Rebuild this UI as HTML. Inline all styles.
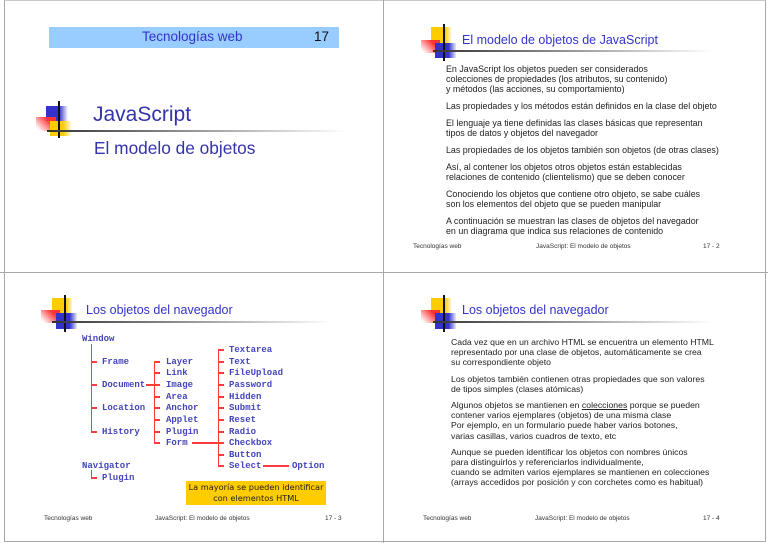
<!DOCTYPE html>
<html><head><meta charset="utf-8">
<style>
*{margin:0;padding:0;box-sizing:border-box}
body{width:768px;height:543px;background:#fff;position:relative;overflow:hidden;font-family:"Liberation Sans",sans-serif}
.a{position:absolute;white-space:nowrap}
.frame{position:absolute;left:4px;top:0;width:762px;height:542px;border:1px solid #a8a8a8;border-top:1px solid #c8c8c8}
.vl{position:absolute;left:383px;top:0;width:1px;height:543px;background:#a8a8a8}
.hl{position:absolute;left:0;top:272px;width:768px;height:1px;background:#a8a8a8}
.title{color:#3333cc;font-size:12.5px}
.body{color:#222;font-size:8.9px;line-height:10px}
.body p{margin-bottom:7px}
.foot{font-size:6.5px;color:#333}
.m{position:absolute;font-family:"Liberation Mono",monospace;font-weight:bold;font-size:9px;color:#4444bb;white-space:nowrap;line-height:10px}
.r{position:absolute;background:#ff3b3b}
</style></head><body>
<div class="frame"></div><div class="vl"></div><div class="hl"></div>

<!-- slide 1 -->
<div class="a" style="left:49px;top:27px;width:290px;height:21px;background:#99ccff"></div>
<div class="a title" style="left:142px;top:29px;font-size:13.5px">Tecnologías web</div>
<div class="a" style="left:314px;top:29px;font-size:13.5px;color:#111">17</div>
<div class="a" style="left:46px;top:106px;width:22px;height:15px;background:linear-gradient(90deg,#3333cc 60%,rgba(51,51,204,0))"></div>
<div class="a" style="left:36px;top:117px;width:20px;height:14px;background:linear-gradient(45deg,rgba(255,80,80,0) 10%,#ff3333 70%)"></div>
<div class="a" style="left:50px;top:121px;width:22px;height:15px;background:linear-gradient(90deg,#ffcc00 60%,rgba(255,204,0,0))"></div>
<div class="a" style="left:58px;top:101px;width:1.5px;height:37px;background:#111"></div>
<div class="a" style="left:47px;top:130px;width:300px;height:2px;background:linear-gradient(90deg,#333,#999 50%,rgba(255,255,255,0))"></div>
<div class="a" style="left:93px;top:103px;font-size:21px;color:#3333aa">JavaScript</div>
<div class="a" style="left:94px;top:138px;font-size:17.3px;color:#3333aa">El modelo de objetos</div>

<!-- slide 2 -->
<div class="a" style="left:431px;top:27px;width:20px;height:16px;background:linear-gradient(90deg,#ffcc00 70%,rgba(255,204,0,0.2))"></div>
<div class="a" style="left:421px;top:40px;width:19px;height:13px;background:linear-gradient(45deg,rgba(255,80,80,0) 10%,#ff3333 70%)"></div>
<div class="a" style="left:435px;top:43px;width:21px;height:15px;background:linear-gradient(90deg,#3333cc 65%,rgba(51,51,204,0.1))"></div>
<div class="a" style="left:443px;top:24px;width:1.5px;height:37px;background:#111"></div>
<div class="a" style="left:433px;top:50px;width:280px;height:2px;background:linear-gradient(90deg,#333,#999 50%,rgba(255,255,255,0))"></div>
<div class="a title" style="left:462px;top:33px">El modelo de objetos de JavaScript</div>
<div class="a body" style="left:446px;top:64px">
<p>En JavaScript los objetos pueden ser considerados<br>colecciones de propiedades (los atributos, su contenido)<br>y métodos (las acciones, su comportamiento)</p>
<p>Las propiedades y los métodos están definidos en la clase del objeto</p>
<p>El lenguaje ya tiene definidas las clases básicas que representan<br>tipos de datos y objetos del navegador</p>
<p>Las propiedades de los objetos también son objetos (de otras clases)</p>
<p>Así, al contener los objetos otros objetos están establecidas<br>relaciones de contenido (clientelismo) que se deben conocer</p>
<p>Conociendo los objetos que contiene otro objeto, se sabe cuáles<br>son los elementos del objeto que se pueden manipular</p>
<p>A continuación se muestran las clases de objetos del navegador<br>en un diagrama que indica sus relaciones de contenido</p>
</div>
<div class="a foot" style="left:413px;top:243px">Tecnologías web</div>
<div class="a foot" style="left:536px;top:243px">JavaScript: El modelo de objetos</div>
<div class="a foot" style="left:703px;top:243px">17 - 2</div>

<!-- slide 3 -->
<div class="a" style="left:52px;top:298px;width:20px;height:16px;background:linear-gradient(90deg,#ffcc00 70%,rgba(255,204,0,0.2))"></div>
<div class="a" style="left:41px;top:310px;width:19px;height:13px;background:linear-gradient(45deg,rgba(255,80,80,0) 10%,#ff3333 70%)"></div>
<div class="a" style="left:56px;top:313px;width:21px;height:16px;background:linear-gradient(90deg,#3333cc 65%,rgba(51,51,204,0.1))"></div>
<div class="a" style="left:64px;top:295px;width:1.5px;height:37px;background:#111"></div>
<div class="a" style="left:52px;top:321px;width:280px;height:2px;background:linear-gradient(90deg,#333,#999 50%,rgba(255,255,255,0))"></div>
<div class="a title" style="left:86px;top:303px">Los objetos del navegador</div>

<div class="r" style="left:90.5px;top:344px;width:1.5px;height:89px"></div>
<div class="r" style="left:91px;top:361px;width:6px;height:1.5px"></div>
<div class="r" style="left:91px;top:384px;width:6px;height:1.5px"></div>
<div class="r" style="left:91px;top:407px;width:6px;height:1.5px"></div>
<div class="r" style="left:91px;top:431px;width:6px;height:1.5px"></div>
<div class="r" style="left:146px;top:384px;width:9px;height:1.5px"></div>
<div class="r" style="left:153.5px;top:361px;width:1.5px;height:83px"></div>
<div class="r" style="left:154px;top:361px;width:6px;height:1.5px"></div>
<div class="r" style="left:154px;top:372px;width:6px;height:1.5px"></div>
<div class="r" style="left:154px;top:384px;width:6px;height:1.5px"></div>
<div class="r" style="left:154px;top:396px;width:6px;height:1.5px"></div>
<div class="r" style="left:154px;top:407px;width:6px;height:1.5px"></div>
<div class="r" style="left:154px;top:419px;width:6px;height:1.5px"></div>
<div class="r" style="left:154px;top:431px;width:6px;height:1.5px"></div>
<div class="r" style="left:154px;top:442px;width:6px;height:1.5px"></div>
<div class="r" style="left:192px;top:442px;width:26px;height:1.5px"></div>
<div class="r" style="left:217.5px;top:349px;width:1.5px;height:118px"></div>
<div class="r" style="left:218px;top:349px;width:6px;height:1.5px"></div>
<div class="r" style="left:218px;top:361px;width:6px;height:1.5px"></div>
<div class="r" style="left:218px;top:372px;width:6px;height:1.5px"></div>
<div class="r" style="left:218px;top:384px;width:6px;height:1.5px"></div>
<div class="r" style="left:218px;top:396px;width:6px;height:1.5px"></div>
<div class="r" style="left:218px;top:407px;width:6px;height:1.5px"></div>
<div class="r" style="left:218px;top:419px;width:6px;height:1.5px"></div>
<div class="r" style="left:218px;top:431px;width:6px;height:1.5px"></div>
<div class="r" style="left:218px;top:442px;width:6px;height:1.5px"></div>
<div class="r" style="left:218px;top:454px;width:6px;height:1.5px"></div>
<div class="r" style="left:218px;top:465px;width:6px;height:1.5px"></div>
<div class="r" style="left:263px;top:465px;width:26px;height:1.5px"></div>
<div class="r" style="left:90.5px;top:470px;width:1.5px;height:9px"></div>
<div class="r" style="left:91px;top:477px;width:6px;height:1.5px"></div>

<div class="m" style="left:82px;top:334px">Window</div>
<div class="m" style="left:102px;top:357px">Frame</div>
<div class="m" style="left:102px;top:380px">Document</div>
<div class="m" style="left:102px;top:403px">Location</div>
<div class="m" style="left:102px;top:427px">History</div>
<div class="m" style="left:82px;top:461px">Navigator</div>
<div class="m" style="left:102px;top:473px">Plugin</div>
<div class="m" style="left:166px;top:357px">Layer</div>
<div class="m" style="left:166px;top:368px">Link</div>
<div class="m" style="left:166px;top:380px">Image</div>
<div class="m" style="left:166px;top:392px">Area</div>
<div class="m" style="left:166px;top:403px">Anchor</div>
<div class="m" style="left:166px;top:415px">Applet</div>
<div class="m" style="left:166px;top:427px">Plugin</div>
<div class="m" style="left:166px;top:438px">Form</div>
<div class="m" style="left:229px;top:345px">Textarea</div>
<div class="m" style="left:229px;top:357px">Text</div>
<div class="m" style="left:229px;top:368px">FileUpload</div>
<div class="m" style="left:229px;top:380px">Password</div>
<div class="m" style="left:229px;top:392px">Hidden</div>
<div class="m" style="left:229px;top:403px">Submit</div>
<div class="m" style="left:229px;top:415px">Reset</div>
<div class="m" style="left:229px;top:427px">Radio</div>
<div class="m" style="left:229px;top:438px">Checkbox</div>
<div class="m" style="left:229px;top:450px">Button</div>
<div class="m" style="left:229px;top:461px">Select</div>
<div class="m" style="left:292px;top:461px">Option</div>

<div class="a" style="left:186px;top:481px;width:140px;height:24px;background:#ffcc00;color:#222;font-family:'DejaVu Sans',sans-serif;font-size:8.2px;line-height:11px;text-align:center;padding-top:1px">La mayoría se pueden identificar<br>con elementos HTML</div>
<div class="a foot" style="left:44px;top:515px">Tecnologías web</div>
<div class="a foot" style="left:155px;top:515px">JavaScript: El modelo de objetos</div>
<div class="a foot" style="left:325px;top:515px">17 - 3</div>

<!-- slide 4 -->
<div class="a" style="left:431px;top:298px;width:20px;height:16px;background:linear-gradient(90deg,#ffcc00 70%,rgba(255,204,0,0.2))"></div>
<div class="a" style="left:421px;top:310px;width:19px;height:13px;background:linear-gradient(45deg,rgba(255,80,80,0) 10%,#ff3333 70%)"></div>
<div class="a" style="left:435px;top:313px;width:21px;height:16px;background:linear-gradient(90deg,#3333cc 65%,rgba(51,51,204,0.1))"></div>
<div class="a" style="left:443px;top:295px;width:1.5px;height:37px;background:#111"></div>
<div class="a" style="left:433px;top:321px;width:280px;height:2px;background:linear-gradient(90deg,#333,#999 50%,rgba(255,255,255,0))"></div>
<div class="a title" style="left:462px;top:303px">Los objetos del navegador</div>
<div class="a body" style="left:451px;top:337px;font-size:8.7px;line-height:10.2px">
<p style="margin-bottom:6px">Cada vez que en un archivo HTML se encuentra un elemento HTML<br>representado por una clase de objetos, automáticamente se crea<br>su correspondiente objeto</p>
<p style="margin-bottom:6px">Los objetos también contienen otras propiedades que son valores<br>de tipos simples (clases atómicas)</p>
<p style="margin-bottom:6px">Algunos objetos se mantienen en <u>colecciones</u> porque se pueden<br>contener varios ejemplares (objetos) de una misma clase<br>Por ejemplo, en un formulario puede haber varios botones,<br>varias casillas, varios cuadros de texto, etc</p>
<p>Aunque se pueden identificar los objetos con nombres únicos<br>para distinguirlos y referenciarlos individualmente,<br>cuando se admiten varios ejemplares se mantienen en colecciones<br>(arrays accedidos por posición y con corchetes como es habitual)</p>
</div>
<div class="a foot" style="left:423px;top:515px">Tecnologías web</div>
<div class="a foot" style="left:535px;top:515px">JavaScript: El modelo de objetos</div>
<div class="a foot" style="left:703px;top:515px">17 - 4</div>
</body></html>
